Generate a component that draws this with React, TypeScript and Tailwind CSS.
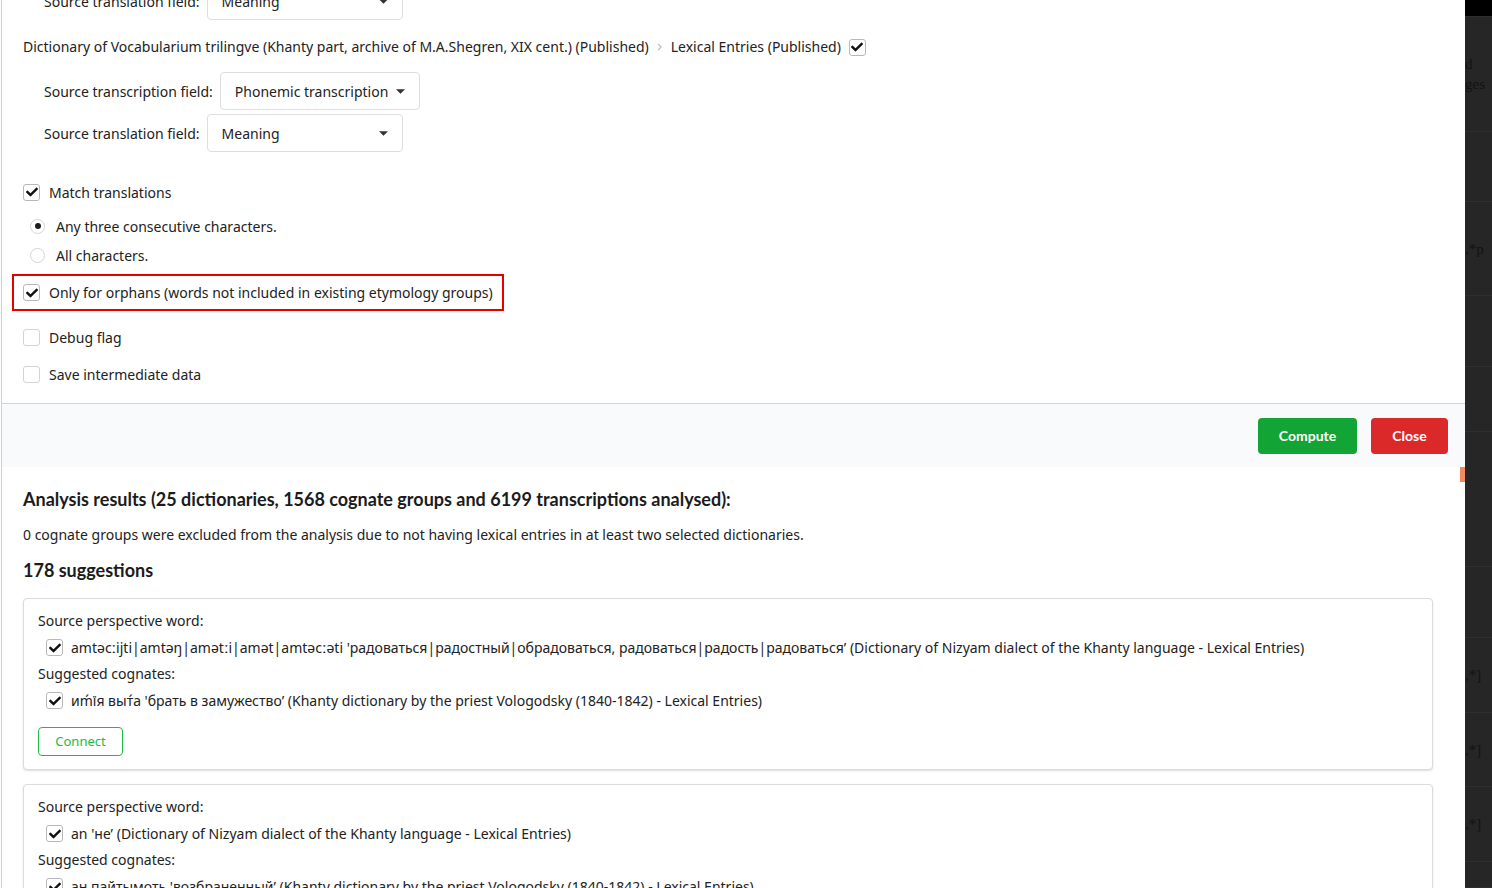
import React from "react";

const FA_CHECK =
  "M173.898 439.404l-166.4-166.4c-9.997-9.997-9.997-26.206 0-36.204l36.203-36.204c9.997-9.998 26.207-9.998 36.204 0L192 312.69 432.095 72.596c9.997-9.997 26.207-9.997 36.204 0l36.203 36.204c9.997 9.997 9.997 26.206 0 36.204l-294.4 294.401c-9.998 9.997-26.207 9.997-36.204-.001z";

function Checkbox({ checked }: { checked?: boolean }) {
  return (
    <span
      className={
        "flex h-[17px] w-[17px] shrink-0 items-center justify-center rounded-[3px] border bg-white " +
        (checked ? "border-[#b8b8b8]" : "border-[#d4d4d5]")
      }
    >
      {checked && (
        <svg viewBox="0 0 512 512" className="h-[12px] w-[12px]">
          <path d={FA_CHECK} fill="#111" />
        </svg>
      )}
    </span>
  );
}

function Radio({ checked }: { checked?: boolean }) {
  return (
    <span className="flex h-[15px] w-[15px] shrink-0 items-center justify-center rounded-full border border-[#d4d4d5] bg-white">
      {checked && <span className="h-[6px] w-[6px] rounded-full bg-[#1b1b1b]" />}
    </span>
  );
}

function Caret() {
  return (
    <svg viewBox="0 0 10 5" className="h-[5px] w-[9px]">
      <polygon points="0,0 10,0 5,5" fill="#333" />
    </svg>
  );
}

function Select({ value, width, tight }: { value: string; width: string; tight?: boolean }) {
  return (
    <div
      className={
        "flex h-[38px] items-center rounded-[4px] border border-[#dedede] bg-white pl-[14px] " +
        width +
        (tight ? " gap-[8px] pr-[14px]" : " justify-between pr-[14px]")
      }
    >
      <span>{value}</span>
      <Caret />
    </div>
  );
}

function Card({
  source,
  cognate,
  first,
}: {
  source: string;
  cognate: string;
  first?: boolean;
}) {
  return (
    <div className="rounded-[4px] border border-[#dcdcdd] bg-white px-[14px] pt-[12px] pb-[13px] shadow-[0_1px_2px_rgba(34,36,38,0.15)]">
      <div className="h-[20px] leading-[20px]">Source perspective word:</div>
      <div className="mt-[4px] flex h-[25px] items-center gap-[8px] pl-[8px]">
        <Checkbox checked />
        <span className="whitespace-nowrap">{source}</span>
      </div>
      <div className="mt-[4px] h-[20px] leading-[20px]">Suggested cognates:</div>
      <div className="mt-[4px] flex h-[25px] items-center gap-[8px] pl-[8px]">
        <Checkbox checked />
        <span className="whitespace-nowrap">{cognate}</span>
      </div>
      {first && (
        <button className="mt-[14px] flex h-[29px] w-[85px] items-center justify-center rounded-[4px] border border-[#21ba45] bg-white text-[13px] text-[#21ba45]">
          Connect
        </button>
      )}
    </div>
  );
}

export default function App() {
  const strip = [
    { h: "h-[17px]", bg: "bg-black", t: null },
    { h: "h-[115px]", bg: "", t: "d\nges" },
    { h: "h-[70px]", bg: "", t: null },
    { h: "h-[94px]", bg: "", t: ",*p" },
    { h: "h-[71px]", bg: "", t: null },
    { h: "h-[65px]", bg: "", t: null },
    { h: "h-[135px]", bg: "", t: null },
    { h: "h-[71px]", bg: "", t: null },
    { h: "h-[75px]", bg: "", t: ",*]" },
    { h: "h-[74px]", bg: "", t: ",*]" },
    { h: "h-[75px]", bg: "", t: ",*]" },
    { h: "h-[26px]", bg: "", t: null },
  ];

  return (
    <div
      className="relative flex h-[888px] w-[1492px] overflow-hidden bg-white text-[14px] text-[#222]"
      style={{ fontFamily: '"Noto Sans", "Open Sans", sans-serif' }}
    >
      {/* Modal */}
      <div className="relative ml-px flex h-full w-[1464px] shrink-0 flex-col border-l border-[#cfcfcf]">
        {/* Settings section */}
        <div className="border-b border-[#d4d4d5] pb-[19px] pl-[21px]">
          <div className="-mt-[18px] flex h-[38px] items-center gap-[7px] pl-[21px]">
            <span>Source translation field:</span>
            <Select value="Meaning" width="w-[196px]" />
          </div>

          <div className="mt-[17px] flex h-[20px] items-center leading-[20px]">
            <span>
              Dictionary of Vocabularium trilingve (Khanty part, archive of M.A.Shegren, XIX cent.)
              (Published)
            </span>
            <svg viewBox="0 0 8 10" className="ml-[8px] mr-[8px] h-[8px] w-[6px]">
              <polyline points="1.5,1 5.5,5 1.5,9" fill="none" stroke="#bdbdbd" strokeWidth="1.6" />
            </svg>
            <span>Lexical Entries (Published)</span>
            <span className="ml-[8px]">
              <Checkbox checked />
            </span>
          </div>

          <div className="mt-[15px] flex h-[38px] items-center gap-[7px] pl-[21px]">
            <span>Source transcription field:</span>
            <Select value="Phonemic transcription" width="" tight />
          </div>

          <div className="mt-[4px] flex h-[38px] items-center gap-[7px] pl-[21px]">
            <span>Source translation field:</span>
            <Select value="Meaning" width="w-[196px]" />
          </div>

          <div className="mt-[30px] flex h-[20px] items-center gap-[9px]">
            <Checkbox checked />
            <span>Match translations</span>
          </div>

          <div className="mt-[14px] flex h-[20px] items-center gap-[11px] pl-[7px]">
            <Radio checked />
            <span>Any three consecutive characters.</span>
          </div>

          <div className="mt-[9px] flex h-[20px] items-center gap-[11px] pl-[7px]">
            <Radio />
            <span>All characters.</span>
          </div>

          <div className="-ml-[11px] mt-[9px] flex h-[37px] w-[492px] items-center gap-[9px] border-2 border-[#e60000] pl-[9px]">
            <Checkbox checked />
            <span>Only for orphans (words not included in existing etymology groups)</span>
          </div>

          <div className="mt-[16px] flex h-[20px] items-center gap-[9px]">
            <Checkbox />
            <span>Debug flag</span>
          </div>

          <div className="mt-[17px] flex h-[20px] items-center gap-[9px]">
            <Checkbox />
            <span>Save intermediate data</span>
          </div>
        </div>

        {/* Actions */}
        <div
          className="flex h-[63px] shrink-0 items-center justify-end gap-[14px] bg-[#f9fafb] pr-[17px]"
          style={{ fontFamily: "Lato, sans-serif" }}
        >
          <button className="h-[36px] w-[99px] rounded-[4px] bg-[#12a434] text-[14px] font-bold text-white">
            Compute
          </button>
          <button className="h-[36px] w-[77px] rounded-[4px] bg-[#db2828] text-[14px] font-bold text-white">
            Close
          </button>
        </div>

        {/* Results */}
        <div className="pl-[21px] pr-[32px]">
          <div
            className="mt-[21px] h-[22px] text-[18px] font-bold leading-[22px] text-[#1b1b1b]"
            style={{ fontFamily: "Lato, sans-serif" }}
          >
            Analysis results (25 dictionaries, 1568 cognate groups and 6199 transcriptions analysed):
          </div>
          <div className="mt-[15px] h-[20px] leading-[20px]">
            0 cognate groups were excluded from the analysis due to not having lexical entries in at
            least two selected dictionaries.
          </div>
          <div
            className="mt-[14px] h-[22px] text-[18px] font-bold leading-[22px] text-[#1b1b1b]"
            style={{ fontFamily: "Lato, sans-serif" }}
          >
            178 suggestions
          </div>

          <div className="mt-[17px] flex flex-col gap-[14px]">
            <Card
              first
              source="amtəcːijti|amtəŋ|amətːi|amət|amtəcːəti 'радоваться|радостный|обрадоваться, радоваться|радость|радоваться’ (Dictionary of Nizyam dialect of the Khanty language - Lexical Entries)"
              cognate="иḿїя выт́а 'брать в замужество’ (Khanty dictionary by the priest Vologodsky (1840-1842) - Lexical Entries)"
            />
            <Card
              source="an 'не’ (Dictionary of Nizyam dialect of the Khanty language - Lexical Entries)"
              cognate="ан пайтымоть 'возбраненный’ (Khanty dictionary by the priest Vologodsky (1840-1842) - Lexical Entries)"
            />
          </div>
        </div>

        <div className="absolute right-0 top-[467px] h-[15px] w-[5px] bg-[#f28a5c]" />
      </div>

      {/* Dimmed background page on the right */}
      <div
        className="flex h-full flex-1 flex-col bg-[#262626]"
        style={{ fontFamily: '"Liberation Serif", serif' }}
      >
        {strip.map((r, i) => (
          <div
            key={i}
            className={
              "flex shrink-0 flex-col justify-center overflow-hidden border-b border-[#2f2f2f] text-[15px] leading-[20px] text-[#121212] " +
              r.h +
              " " +
              r.bg
            }
          >
            {r.t &&
              r.t.split("\n").map((line, j) => (
                <span key={j} className="whitespace-nowrap">
                  {line}
                </span>
              ))}
          </div>
        ))}
      </div>
    </div>
  );
}
